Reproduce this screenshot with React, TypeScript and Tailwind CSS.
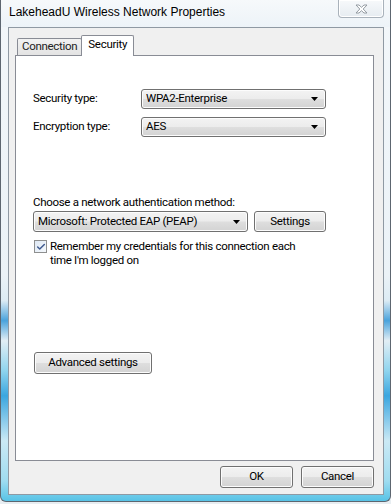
import { Check } from 'lucide-react';

const font = { fontFamily: 'Roboto, "Liberation Sans", Arial, sans-serif' };

function Arrow() {
  return (
    <svg width="7" height="4" viewBox="0 0 7 4" className="shrink-0">
      <path d="M0 0h7L3.5 4z" fill="#000" />
    </svg>
  );
}

function Combo({ value, className }: { value: string; className: string }) {
  return (
    <div
      className={`h-[20px] flex items-center justify-between pl-[4px] pr-[7px] rounded-[3px] border border-[#707070] bg-[linear-gradient(to_bottom,#f3f3f3_0%,#ececec_48%,#dedede_52%,#d3d3d3_100%)] shadow-[inset_0_0_0_1px_#fcfcfc] ${className}`}
    >
      <span className="leading-none">{value}</span>
      <Arrow />
    </div>
  );
}

function WinButton({ label, className }: { label: string; className: string }) {
  return (
    <div
      className={`flex items-center justify-center rounded-[3px] border border-[#707070] bg-[linear-gradient(to_bottom,#f3f3f3_0%,#ececec_48%,#dedede_52%,#d3d3d3_100%)] shadow-[inset_0_0_0_1px_#fcfcfc] ${className}`}
    >
      <span className="leading-none">{label}</span>
    </div>
  );
}

export default function App() {
  return (
    <div className="w-[391px] h-[504px] bg-[#e8eef2] overflow-hidden text-[11.5px] tracking-[-0.3px] text-black" style={font}>
      <div className="h-[502px] flex flex-col border border-t-0 border-[#5d6670] rounded-b-[6px] bg-[linear-gradient(to_bottom,#f3f7fa_0%,#ebf2f7_55%,#dcebf4_60%,#4aa3dc_64%,#e2eef5_68%,#8fd4ee_74%,#3ba6df_79%,#cbe9f5_88%,#9fdcf0_96%,#57c3e6_100%)]">
        {/* Title bar */}
        <div className="h-[27px] flex items-start justify-between pl-[8px] pr-[6px] bg-[linear-gradient(to_bottom,#f6f9fb,#edf3f8)]">
          <span className="pt-[5px] leading-[14px] text-[12px] tracking-normal [font-family:'Liberation_Sans',Arial,sans-serif]">
            LakeheadU Wireless Network Properties
          </span>
          <div className="w-[46px] h-[18px] flex items-center justify-center rounded-b-[4px] border border-t-0 border-[#a9b2bb] bg-[linear-gradient(to_bottom,#f7f9fb,#e6ecf1)] shadow-[inset_0_0_0_1px_#ffffff]">
            <svg width="13" height="10" viewBox="0 0 13 10">
              <path
                d="M1 1h3l2.5 2.3L9 1h3L8.2 5 12 9H9L6.5 6.7 4 9H1l3.8-4z"
                fill="#ffffff"
                stroke="#8a929a"
                strokeWidth="0.9"
                strokeLinejoin="round"
              />
            </svg>
          </div>
        </div>

        {/* Client area */}
        <div className="flex-1 ml-[7px] mr-[6px] mb-[6px] border border-[#8f99a3] bg-[#f0f0f0] flex flex-col pl-[6px] pr-[9px] pt-[7px] pb-[6px]">
          {/* Tabs */}
          <div className="h-[21px] flex items-end pl-[2px] relative z-10">
            <div className="h-[17px] mb-[1px] px-[4px] flex items-center border border-b-0 border-[#898c95] rounded-t-[2px] bg-[linear-gradient(to_bottom,#f2f2f2,#e3e3e3)] text-[#222]">
              Connection
            </div>
            <div className="h-[21px] -ml-px px-[6px] pb-[3px] flex items-center border border-b-0 border-[#898c95] rounded-t-[2px] bg-white">
              Security
            </div>
          </div>

          {/* Panel */}
          <div className="flex-1 -mt-px border border-[#898c95] bg-white flex flex-col pl-[17px] pt-[33px]">
            <div className="flex items-center">
              <span className="w-[108px]">Security type:</span>
              <Combo value="WPA2-Enterprise" className="w-[185px]" />
            </div>
            <div className="flex items-center mt-[8px]">
              <span className="w-[108px]">Encryption type:</span>
              <Combo value="AES" className="w-[185px]" />
            </div>

            <div className="mt-[58px] leading-[15px]">Choose a network authentication method:</div>
            <div className="flex items-center gap-[6px] mt-[1px]">
              <Combo value="Microsoft: Protected EAP (PEAP)" className="w-[215px] !h-[21px]" />
              <WinButton label="Settings" className="w-[72px] h-[21px]" />
            </div>

            <div className="flex items-start mt-[7px] pl-[1px]">
              <div className="w-[13px] h-[13px] mt-[1px] border border-[#8e8f8f] bg-[linear-gradient(to_bottom_right,#dfe9f5,#f4f8fc)] flex items-center justify-center shrink-0">
                <Check className="w-[10px] h-[10px] text-[#3f5a8f]" strokeWidth={3.5} />
              </div>
              <div className="ml-[3px] leading-[14px]">
                Remember my credentials for this connection each
                <br />
                time I&apos;m logged on
              </div>
            </div>

            <WinButton label="Advanced settings" className="w-[118px] h-[22px] mt-[85px] ml-px" />
          </div>

          {/* Bottom buttons */}
          <div className="flex justify-end gap-[8px] mt-[5px]">
            <WinButton label="OK" className="w-[73px] h-[22px]" />
            <WinButton label="Cancel" className="w-[73px] h-[22px]" />
          </div>
        </div>
      </div>
    </div>
  );
}
